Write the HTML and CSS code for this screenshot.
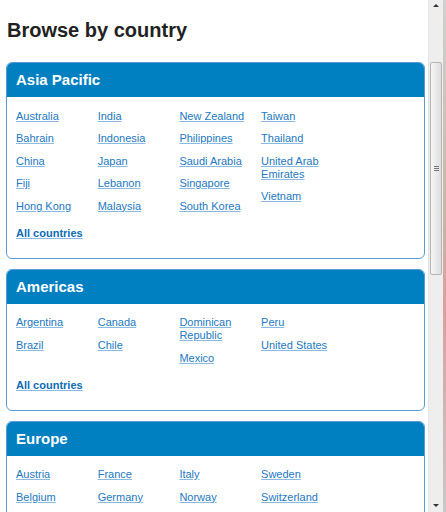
FILE: index.html
```html
<!DOCTYPE html>
<html lang="en">
<head>
  <meta charset="UTF-8">
  <title>Browse by country</title>
  <meta name="viewport" content="width=device-width, initial-scale=1.0">
  <link rel="stylesheet" href="styles.css">
</head>
<body>

<div class="page">
  <div class="content">
    <h1>Browse by country</h1>

    <div class="region">
      <h2>Asia Pacific</h2>
      <div class="region-body">
        <div class="cols">
          <ul>
            <li><a href="#">Australia</a></li>
            <li><a href="#">Bahrain</a></li>
            <li><a href="#">China</a></li>
            <li><a href="#">Fiji</a></li>
            <li><a href="#">Hong Kong</a></li>
          </ul>
          <ul>
            <li><a href="#">India</a></li>
            <li><a href="#">Indonesia</a></li>
            <li><a href="#">Japan</a></li>
            <li><a href="#">Lebanon</a></li>
            <li><a href="#">Malaysia</a></li>
          </ul>
          <ul>
            <li><a href="#">New Zealand</a></li>
            <li><a href="#">Philippines</a></li>
            <li><a href="#">Saudi Arabia</a></li>
            <li><a href="#">Singapore</a></li>
            <li><a href="#">South Korea</a></li>
          </ul>
          <ul>
            <li><a href="#">Taiwan</a></li>
            <li><a href="#">Thailand</a></li>
            <li><a href="#">United Arab Emirates</a></li>
            <li><a href="#">Vietnam</a></li>
          </ul>
        </div>
        <a class="all" href="#">All countries</a>
      </div>
    </div>

    <div class="region">
      <h2>Americas</h2>
      <div class="region-body">
        <div class="cols">
          <ul>
            <li><a href="#">Argentina</a></li>
            <li><a href="#">Brazil</a></li>
          </ul>
          <ul>
            <li><a href="#">Canada</a></li>
            <li><a href="#">Chile</a></li>
          </ul>
          <ul>
            <li><a href="#">Dominican Republic</a></li>
            <li><a href="#">Mexico</a></li>
          </ul>
          <ul>
            <li><a href="#">Peru</a></li>
            <li><a href="#">United States</a></li>
          </ul>
        </div>
        <a class="all" href="#">All countries</a>
      </div>
    </div>

    <div class="region">
      <h2>Europe</h2>
      <div class="region-body">
        <div class="cols">
          <ul>
            <li><a href="#">Austria</a></li>
            <li><a href="#">Belgium</a></li>
          </ul>
          <ul>
            <li><a href="#">France</a></li>
            <li><a href="#">Germany</a></li>
          </ul>
          <ul>
            <li><a href="#">Italy</a></li>
            <li><a href="#">Norway</a></li>
          </ul>
          <ul>
            <li><a href="#">Sweden</a></li>
            <li><a href="#">Switzerland</a></li>
          </ul>
        </div>
      </div>
    </div>
  </div>

  <!-- fake window scrollbar -->
  <div class="scrollbar">
    <div class="sb-btn"><span class="arrow-up"></span></div>
    <div class="sb-track">
      <div class="sb-thumb"><span class="grip"></span></div>
    </div>
    <div class="sb-btn"><span class="arrow-down"></span></div>
  </div>
  <div class="edge"></div>
</div>

</body>
</html>
```

FILE: styles.css
```css
html, body {
  margin: 0;
  height: 100%;
  overflow: hidden;
  background: #fff;
}
body {
  font-family: 'Liberation Sans', Arial, sans-serif;
}
.page {
  display: flex;
  height: 512px;
  overflow: hidden;
}
.content {
  flex: 1;
  padding: 0 0 0 6px;
  min-width: 0;
}
h1 {
  font-size: 20px;
  line-height: 23px;
  color: #222;
  margin: 19px 0 20px 1px;
}
.region {
  border: 1px solid #5b9bd5;
  border-radius: 6px;
  overflow: hidden;
  margin-bottom: 10px;
}
.region h2 {
  margin: 0;
  height: 34px;
  line-height: 34px;
  padding-left: 9px;
  font-size: 15px;
  color: #fff;
  background-color: #0080c1;
}
.region-body {
  padding: 12.5px 9px 18px;
}
.cols {
  display: grid;
  grid-template-columns: repeat(4, 81.7px);
}
.cols ul {
  list-style: none;
  margin: 0;
  padding: 0 6px 0 0;
}
.cols li {
  font-size: 11px;
  line-height: 13px;
  margin-bottom: 9.5px;
}
.cols a, .all {
  color: #2479c2;
  text-decoration: underline;
  text-decoration-color: #8cb9df;
}
.all {
  display: block;
  margin-top: 4.5px;
  font-size: 11px;
  line-height: 13px;
  font-weight: bold;
  color: #0b6db7;
}
.scrollbar {
  width: 14px;
  margin-left: 3px;
  display: flex;
  flex-direction: column;
  background: #eeeeee;
  border-left: 1px solid #e4e4e4;
}
.sb-btn {
  height: 17px;
  display: flex;
  align-items: center;
  justify-content: center;
}
.arrow-up, .arrow-down {
  width: 0;
  height: 0;
  border-left: 3px solid transparent;
  border-right: 3px solid transparent;
}
.arrow-up {
  border-bottom: 3px solid #333;
  margin-top: -6px;
}
.arrow-down {
  border-top: 3px solid #333;
  margin-top: 4px;
}
.sb-track {
  flex: 1;
  padding-top: 45px;
}
.sb-thumb {
  height: 211px;
  margin: 0 1px 0 1px;
  border: 1px solid #b4b4b4;
  border-radius: 2px;
  background: linear-gradient(to right, #f6f6f6, #dedede);
  display: flex;
  align-items: center;
  justify-content: center;
}
.grip {
  width: 5px;
  height: 5px;
  background: repeating-linear-gradient(to bottom, #777 0, #777 1px, transparent 1px, transparent 2px);
}
.edge {
  width: 3px;
  background: linear-gradient(to bottom, #d0d0d0, #c8b8a8 40%, #d8a0a0 60%, #c8c8c8);
}
```
